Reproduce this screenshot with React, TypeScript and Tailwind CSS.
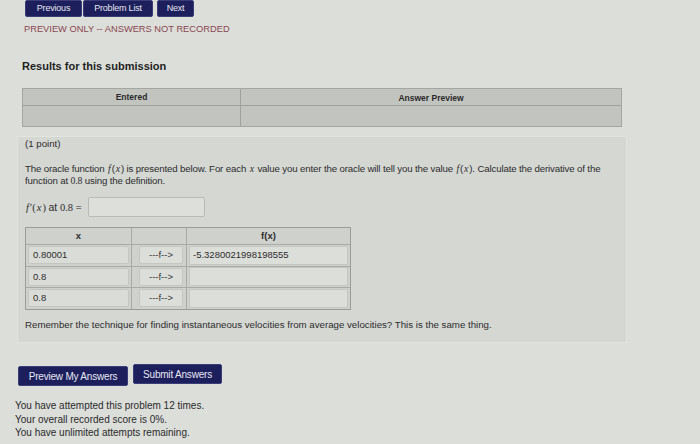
import React from "react";

const sans = { fontFamily: '"Liberation Sans", Arial, sans-serif' };
const serif = { fontFamily: '"Liberation Serif", "Times New Roman", serif' };

function M({ children }: { children: React.ReactNode }) {
  return <span className="italic px-[1px]" style={serif}>{children}</span>;
}

function Btn({ children, className = "" }: { children: React.ReactNode; className?: string }) {
  return (
    <div className={"bg-[#1c1f5c] text-[#e6e7f2] rounded-[2px] border border-[#3a3d78] flex items-center justify-center tracking-[-0.2px] " + className}>
      {children}
    </div>
  );
}

export default function App() {
  return (
    <div className="w-[700px] h-[444px] overflow-hidden bg-[#dcdeda] text-[#2a2a2a] relative" style={sans}>
      <div className="flex gap-[1px] pl-[25px] text-[9px]">
        <Btn className="w-[57px] h-[17px]">Previous</Btn>
        <Btn className="w-[70px] h-[17px]">Problem List</Btn>
        <Btn className="w-[37px] h-[17px] ml-[3px]">Next</Btn>
      </div>
      <div className="pl-[24px] mt-[6px] text-[9.3px] leading-[12px] text-[#8a4650]">PREVIEW ONLY -- ANSWERS NOT RECORDED</div>
      <div className="pl-[22px] mt-[24px] text-[11px] leading-[14px] font-bold text-[#1e1e1e]">Results for this submission</div>

      <div className="ml-[22px] mt-[15px] w-[600px] border border-[#a4a6a2] bg-[#c2c4c0]">
        <div className="flex h-[16px] text-[8.5px] font-bold">
          <div className="w-[218px] border-r border-[#9fa19d] flex items-center justify-center">Entered</div>
          <div className="flex-1 flex items-end justify-center">Answer Preview</div>
        </div>
        <div className="flex h-[21px] border-t border-[#9fa19d]">
          <div className="w-[218px] border-r border-[#9fa19d]"></div>
          <div className="flex-1"></div>
        </div>
      </div>

      <div className="ml-[17px] mt-[9px] w-[610px] h-[207px] bg-[#d5d7d3] border border-[#e2e4e0] pl-[7px] pt-[1px] text-[9.7px] leading-[12px] text-[#2c2c2c]">
        <div>(1 point)</div>
        <div className="mt-[13px] w-[598px] tracking-[-0.15px]">
          The oracle function <M>f</M>(<M>x</M>) is presented below. For each <M>x</M> value you enter the oracle will tell you the value <M>f</M>(<M>x</M>). Calculate the derivative of the function at <span style={serif}>0.8</span> using the definition.
        </div>
        <div className="mt-[10px] flex items-center">
          <span className="text-[10.5px]" style={serif}>
            <M>f</M>′(<M>x</M>) <span style={sans}>at</span> 0.8 =
          </span>
          <div className="ml-[6px] w-[117px] h-[20px] bg-[#dddfdb] border border-[#b8bab6] rounded-[2px]"></div>
        </div>

        <div className="mt-[10px] w-[326px] border border-[#9a9c98] bg-[#cfd1cd] text-[9.5px]">
          <div className="flex h-[16px] font-bold">
            <div className="w-[106px] flex items-center justify-center border-r border-[#a8aaa6]">x</div>
            <div className="w-[55px] border-r border-[#a8aaa6]"></div>
            <div className="flex-1 flex items-center justify-center">f(x)</div>
          </div>
          {["0.80001", "0.8", "0.8"].map((v, i) => (
            <div key={i} className="flex h-[21.5px] border-t border-[#a8aaa6]">
              <div className="w-[106px] border-r border-[#a8aaa6] flex items-center px-[2px]">
                <div className="w-full h-[18px] bg-[#dadcd8] border border-[#c4c6c2] rounded-[2px] flex items-center pl-[4px]">{v}</div>
              </div>
              <div className="w-[55px] border-r border-[#a8aaa6] flex items-center justify-end pr-[3px]">
                <div className="w-[44px] h-[18px] bg-[#dcdeda] border border-[#c4c6c2] rounded-[2px] flex items-center justify-center text-[#333]">---f--&gt;</div>
              </div>
              <div className="flex-1 flex items-center px-[2px]">
                <div className="w-full h-[19px] bg-[#dcdeda] border border-[#c4c6c2] flex items-center pl-[3px]">{i === 0 ? "-5.3280021998198555" : ""}</div>
              </div>
            </div>
          ))}
        </div>

        <div className="mt-[9px]">Remember the technique for finding instantaneous velocities from average velocities? This is the same thing.</div>
      </div>

      <div className="flex gap-[5px] pl-[18px] mt-[23px] text-[10px]">
        <Btn className="w-[110px] h-[20px]">Preview My Answers</Btn>
        <Btn className="w-[89px] h-[20px] -mt-[2px]">Submit Answers</Btn>
      </div>

      <div className="pl-[15px] mt-[13px] text-[10px] leading-[13.5px] text-[#2a2a2a]">
        <div>You have attempted this problem 12 times.</div>
        <div>Your overall recorded score is 0%.</div>
        <div>You have unlimited attempts remaining.</div>
      </div>
    </div>
  );
}
